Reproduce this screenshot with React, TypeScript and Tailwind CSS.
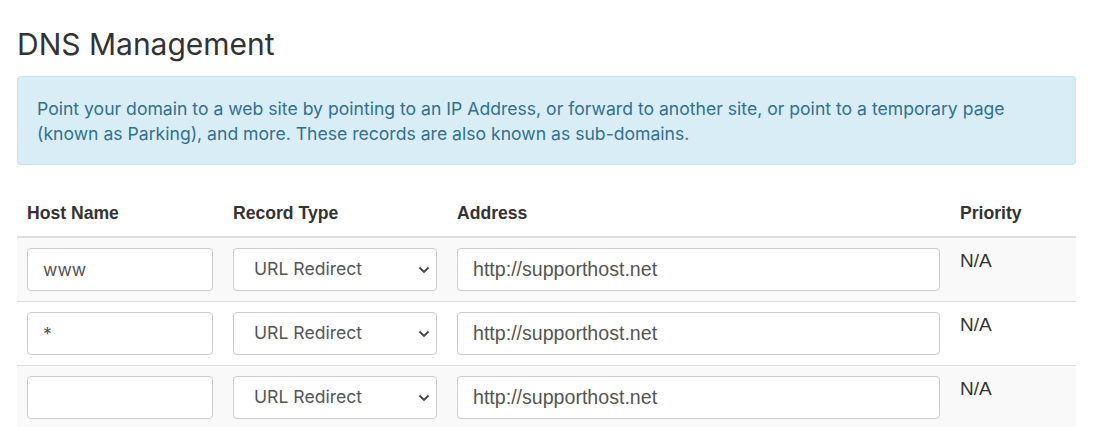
const records = [
  { host: "www", type: "URL Redirect", address: "http://supporthost.net", priority: "N/A" },
  { host: "*", type: "URL Redirect", address: "http://supporthost.net", priority: "N/A" },
  { host: "", type: "URL Redirect", address: "http://supporthost.net", priority: "N/A" },
];

const inputClass =
  "h-[43px] w-full rounded-[4px] border border-[#cccccc] bg-white px-[15px] text-[#555555] outline-none";

function Chevron() {
  return (
    <svg
      className="pointer-events-none absolute right-[7px] top-1/2 -translate-y-1/2"
      width="12"
      height="8"
      viewBox="0 0 12 8"
      fill="none"
    >
      <path d="M1.5 1.5 6 6 10.5 1.5" stroke="#444" strokeWidth="1.9" />
    </svg>
  );
}

export default function App() {
  return (
    <div className="min-h-screen bg-white pl-[17px] pr-[21px] pt-[26px] font-['Inter',sans-serif] text-[#333333]">
      <h2 className="mb-[13px] text-[30px] font-normal leading-[37px]">DNS Management</h2>
      <div className="rounded-[4px] border border-[#bce8f1] bg-[#d9edf7] px-[19px] pb-[18px] pt-[19px] text-[17.6px] leading-[25px] text-[#31708f]">
        Point your domain to a web site by pointing to an IP Address, or forward to another site, or point to a temporary page
        <br />
        (known as Parking), and more. These records are also known as sub-domains.
      </div>
      <table className="mt-[33px] w-full border-collapse">
        <thead>
          <tr className="border-b-2 border-[#dddddd] text-left font-['Liberation_Sans',Arial,sans-serif] text-[17.6px]">
            <th className="w-[206px] px-[10px] pb-[12px] pt-[4px] font-bold leading-[22px]">Host Name</th>
            <th className="w-[224px] px-[10px] pb-[12px] pt-[4px] font-bold leading-[22px]">Record Type</th>
            <th className="w-[503px] px-[10px] pb-[12px] pt-[4px] font-bold leading-[22px]">Address</th>
            <th className="px-[10px] pb-[12px] pt-[4px] font-bold leading-[22px]">Priority</th>
          </tr>
        </thead>
        <tbody>
          {records.map((r, i) => (
            <tr key={i} className={`border-t border-[#dddddd] ${i % 2 === 0 ? "bg-[#f9f9f9]" : "bg-white"}`}>
              <td className="p-[10px] align-top">
                <input className={`${inputClass} text-[17.6px]`} defaultValue={r.host} />
              </td>
              <td className="p-[10px] align-top">
                <div className="relative">
                  <select className={`${inputClass} appearance-none pl-[20px] text-[17.6px]`} defaultValue={r.type}>
                    <option>URL Redirect</option>
                    <option>A (Address)</option>
                    <option>CNAME (Alias)</option>
                    <option>MX (Mail)</option>
                  </select>
                  <Chevron />
                </div>
              </td>
              <td className="p-[10px] align-top">
                <input
                  className={`${inputClass} font-['Liberation_Sans',Arial,sans-serif] text-[19.6px]`}
                  defaultValue={r.address}
                />
              </td>
              <td className="px-[10px] pt-[11px] align-top font-['Liberation_Sans',Arial,sans-serif] text-[19px] leading-[24px]">
                {r.priority}
              </td>
            </tr>
          ))}
        </tbody>
      </table>
    </div>
  );
}
